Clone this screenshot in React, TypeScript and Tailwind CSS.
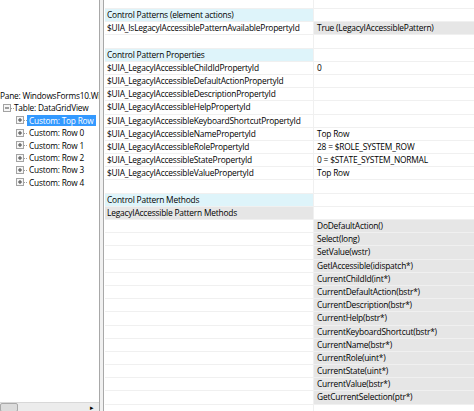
import React from "react";

type Kind = "partial" | "header" | "row" | "blank" | "sub" | "method" | "grayval";

interface Row {
  kind: Kind;
  name?: string;
  value?: string;
}

const rows: Row[] = [
  { kind: "partial" },
  { kind: "header", name: "Control Patterns (element actions)" },
  { kind: "grayval", name: "$UIA_IsLegacyIAccessiblePatternAvailablePropertyId", value: "True (LegacyIAccessiblePattern)" },
  { kind: "blank" },
  { kind: "header", name: "Control Pattern Properties" },
  { kind: "row", name: "$UIA_LegacyIAccessibleChildIdPropertyId", value: "0" },
  { kind: "row", name: "$UIA_LegacyIAccessibleDefaultActionPropertyId" },
  { kind: "row", name: "$UIA_LegacyIAccessibleDescriptionPropertyId" },
  { kind: "row", name: "$UIA_LegacyIAccessibleHelpPropertyId" },
  { kind: "row", name: "$UIA_LegacyIAccessibleKeyboardShortcutPropertyId" },
  { kind: "row", name: "$UIA_LegacyIAccessibleNamePropertyId", value: "Top Row" },
  { kind: "row", name: "$UIA_LegacyIAccessibleRolePropertyId", value: "28 = $ROLE_SYSTEM_ROW" },
  { kind: "row", name: "$UIA_LegacyIAccessibleStatePropertyId", value: "0 = $STATE_SYSTEM_NORMAL" },
  { kind: "row", name: "$UIA_LegacyIAccessibleValuePropertyId", value: "Top Row" },
  { kind: "blank" },
  { kind: "header", name: "Control Pattern Methods" },
  { kind: "sub", name: "LegacyIAccessible Pattern Methods" },
  ...[
    "DoDefaultAction()",
    "Select(long)",
    "SetValue(wstr)",
    "GetIAccessible(idispatch*)",
    "CurrentChildId(int*)",
    "CurrentDefaultAction(bstr*)",
    "CurrentDescription(bstr*)",
    "CurrentHelp(bstr*)",
    "CurrentKeyboardShortcut(bstr*)",
    "CurrentName(bstr*)",
    "CurrentRole(uint*)",
    "CurrentState(uint*)",
    "CurrentValue(bstr*)",
    "GetCurrentSelection(ptr*)",
  ].map((m) => ({ kind: "method" as Kind, value: m })),
  { kind: "blank" },
];

function Expander({ open }: { open: boolean }) {
  return (
    <svg width="11" height="9" viewBox="0 0 11 9" className="shrink-0">
      <rect x="0.5" y="0.5" width="7" height="7" fill="#f6f6f6" stroke="#a3a3a3" />
      <line x1="2" y1="4" x2="6" y2="4" stroke="#444" />
      {!open && <line x1="4" y1="2" x2="4" y2="6" stroke="#444" />}
      <line x1="8" y1="4.5" x2="11" y2="4.5" stroke="#a0a0a0" strokeDasharray="1 1" />
    </svg>
  );
}

function TreePane() {
  const children = ["Custom: Top Row", "Custom: Row 0", "Custom: Row 1", "Custom: Row 2", "Custom: Row 3", "Custom: Row 4"];
  return (
    <div className="relative w-[100px] shrink-0 overflow-hidden border-r border-[#a8a8a8] bg-white text-[8.3px]">
      <div className="pt-[90px]">
        <div className="h-[12.4px] whitespace-nowrap leading-[12.4px]">Pane: WindowsForms10.Window</div>
        <div className="flex h-[12.4px] items-center whitespace-nowrap pl-[3px]">
          <Expander open />
          <span className="leading-[12.4px]">Table: DataGridView</span>
        </div>
        {children.map((c, i) => (
          <div key={c} className="flex h-[12.4px] items-center whitespace-nowrap pl-[16px]">
            <Expander open={false} />
            <span
              className={
                i === 0
                  ? "bg-[#3399ff] px-[2px] leading-[11px] text-white"
                  : "pl-[2px] leading-[12.4px]"
              }
            >
              {c}
            </span>
          </div>
        ))}
      </div>
      <div className="absolute bottom-0 left-0 right-0 flex h-[9px] items-start border-t border-[#d8d8d8] bg-[#ececec]">
        <div className="h-[9px] w-[18px] rounded-[2px] border border-[#a9a9a9] bg-[#dcdcdc]" />
        <div className="ml-auto mr-[5px] mt-[1px] text-[7px] leading-[7px] text-black">▸</div>
      </div>
    </div>
  );
}

function PropertyGrid() {
  return (
    <div className="flex-1 overflow-hidden border-l border-[#a8a8a8] bg-white pl-[1px]">
      {rows.map((r, i) => {
        const h = r.kind === "partial" ? "h-[9px]" : "h-[13.2px]";
        const c1 =
          r.kind === "header"
            ? "bg-[#def4fa]"
            : r.kind === "sub"
            ? "bg-[#e6e6e6]"
            : "bg-white";
        const c2 =
          r.kind === "method" || r.kind === "grayval" ? "bg-[#e6e6e6]" : "bg-white";
        return (
          <div key={i} className={`grid grid-cols-[208px_1fr] ${h}`}>
            <div className={`${c1} overflow-hidden whitespace-nowrap border-b border-[#f0f0f0] pl-[2px] leading-[12.4px]`}>
              {r.name}
            </div>
            <div className={`${c2} overflow-hidden whitespace-nowrap border-b border-l border-[#f0f0f0] pl-[3px] leading-[12.4px]`}>
              {r.value}
            </div>
          </div>
        );
      })}
    </div>
  );
}

export default function App() {
  return (
    <div
      className="flex h-[411px] w-[474px] overflow-hidden bg-white text-[8.4px] tracking-[-0.2px] text-black"
      style={{ fontFamily: '"Open Sans", "Noto Sans", sans-serif' }}
    >
      <TreePane />
      <div className="w-[3px] shrink-0 bg-[#f0f0f0]" />
      <PropertyGrid />
    </div>
  );
}
